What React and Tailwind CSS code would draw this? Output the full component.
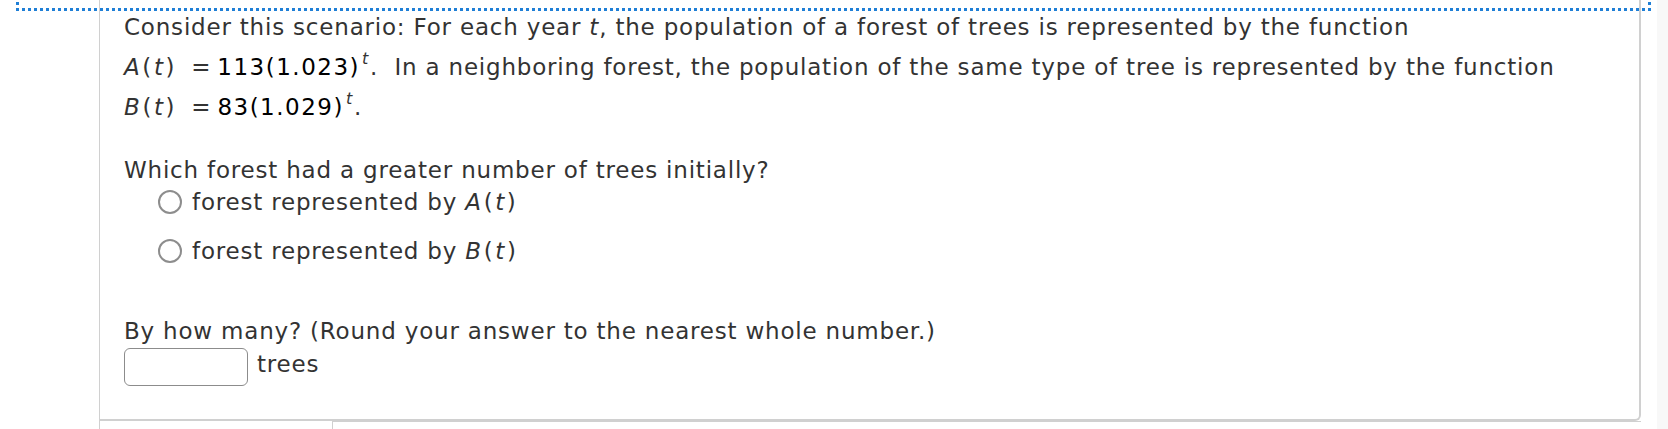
import React from "react";

const M = ({ children }) => (
  <span className="italic">{children}</span>
);

function Sup() {
  return <sup className="relative -top-[11px] ml-[2px] mr-[1px] text-[16px] italic leading-none">t</sup>;
}

function Radio({ children }) {
  return (
    <div className="flex h-[32px] items-center">
      <span className="ml-[34px] mr-[10px] inline-block h-[24px] w-[24px] shrink-0 rounded-full border-2 border-[#8d8d8d] bg-white" />
      <span>{children}</span>
    </div>
  );
}

function Fn({ name }) {
  return (
    <span className="tracking-[2.6px]">
      <M>{name}</M>(<M>t</M>)
    </span>
  );
}

export default function App() {
  return (
    <div className="relative h-[429px] w-[1668px] overflow-hidden bg-white font-['DejaVu_Sans',sans-serif] text-[23px] tracking-[0.8px] text-[#333]">
      <div className="flex h-full">
        <div className="w-[99px] shrink-0" />
        <div className="flex w-[1558px] shrink-0 flex-col">
          <div className="h-[421px] w-[1542px] rounded-br-[6px] border-b-2 border-l border-r-2 border-[#d0d0d0] pl-[24px] pt-[7px]">
            <div className="leading-[40px]">
              <div>
                Consider this scenario: For each year <M>t</M>, the population of a forest of trees is represented by the function
              </div>
              <div>
                <Fn name="A" /> <span className="mx-[6px]">=</span>
                <span className="tracking-[1.5px] text-black">113(1.023)</span>
                <Sup />.&nbsp; In a neighboring forest, the population of the same type of tree is represented by the function
              </div>
              <div>
                <Fn name="B" /> <span className="mx-[6px]">=</span>
                <span className="tracking-[1.5px] text-black">83(1.029)</span>
                <Sup />.
              </div>
            </div>
            <div className="mt-[27px] leading-[32px]">Which forest had a greater number of trees initially?</div>
            <Radio>
              forest represented by <Fn name="A" />
            </Radio>
            <div className="mt-[17px]">
              <Radio>
                forest represented by <Fn name="B" />
              </Radio>
            </div>
            <div className="mt-[48px] leading-[32px]">By how many? (Round your answer to the nearest whole number.)</div>
            <div className="mt-[1px] flex items-start">
              <div className="h-[38px] w-[124px] rounded-[6px] border border-[#8c8c8c] bg-white" />
              <span className="ml-[9px] leading-[32px]">trees</span>
            </div>
          </div>
          <div className="flex h-[8px]">
            <div className="w-[233px] border-l border-[#d0d0d0]" />
            <div className="w-[1309px] border-l border-t border-[#d0d0d0]" />
          </div>
        </div>
        <div className="flex-1 bg-[#f8f8f8]" />
      </div>
      <div className="absolute left-[16px] top-[2px] h-[9px] w-[1635px] border-b-[3px] border-l-[3px] border-r-[3px] border-dotted border-[#1f7fd6]" />
    </div>
  );
}
